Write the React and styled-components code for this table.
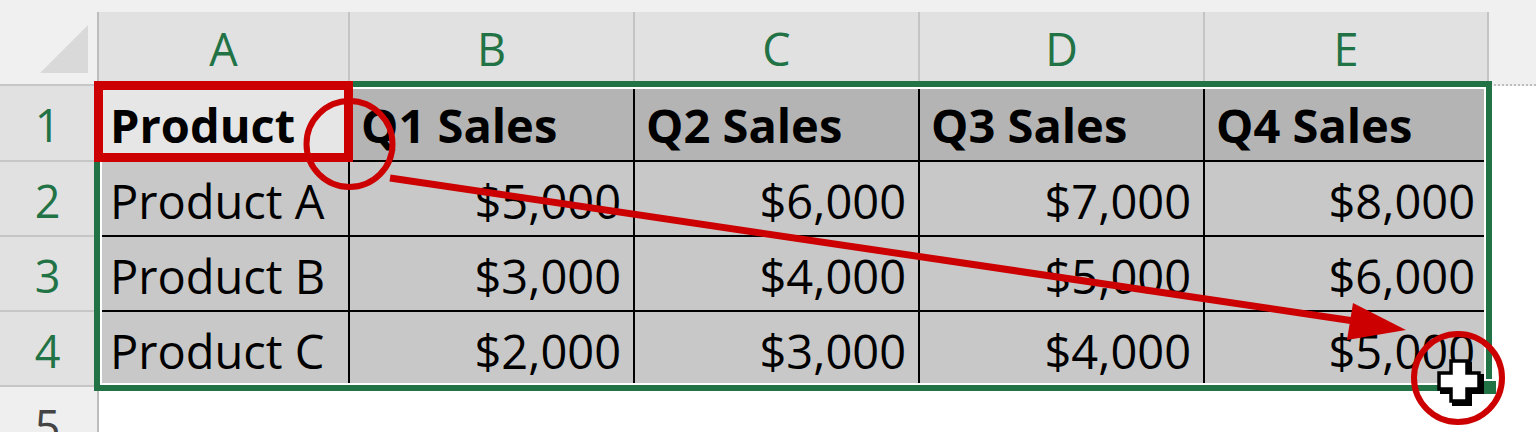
import React from "react";
import styled, { createGlobalStyle } from "styled-components";

const GREEN = "#217346";
const RED = "#cc0000";

const Global = createGlobalStyle`
  html, body {
    margin: 0;
    padding: 0;
    background: #ffffff;
    overflow: hidden;
  }
`;

const Sheet = styled.div`
  position: relative;
  width: 1536px;
  height: 432px;
  display: grid;
  grid-template-columns: 99px 251px 285px 285px 285px 284px 1fr;
  grid-template-rows: 12px 74px 76px 75px 75px 75px 1fr;
  font-family: "Open Sans", Lato, sans-serif;
  font-size: 47px;
  line-height: 46px;
  overflow: hidden;
`;

const TopStrip = styled.div`
  grid-column: 1 / -1;
  background: #f0f0f0;
`;

const Corner = styled.div`
  background: #f0f0f0;
  border-right: 2px solid #bdbdbd;
  border-bottom: 2px solid #c6c6c6;
  box-sizing: border-box;
  display: flex;
  align-items: flex-end;
  justify-content: flex-end;
  padding: 0 9px 11px 0;

  svg {
    display: block;
  }
`;

const ColHeader = styled.div`
  background: #e1e1e1;
  color: ${GREEN};
  font-size: 45px;
  border-right: 2px solid #c4c4c4;
  border-bottom: 2px solid #c6c6c6;
  box-sizing: border-box;
  text-align: center;
  padding-top: 14px;
`;

const HeaderFiller = styled.div`
  background: #f0f0f0;
  border-bottom: 2px dotted #bdbdbd;
  box-sizing: border-box;
`;

const RowHeader = styled.div`
  background: ${(p) => (p.$active ? "#e1e1e1" : "#efefef")};
  color: ${(p) => (p.$active ? GREEN : "#444444")};
  font-size: 45px;
  border-right: 2px solid #bdbdbd;
  border-bottom: 2px solid #c6c6c6;
  box-sizing: border-box;
  text-align: center;
  padding: 16px 2px 0 0;
`;

const Cell = styled.div`
  background: ${(p) => p.$bg};
  color: #000;
  font-weight: ${(p) => (p.$bold ? 700 : 400)};
  text-align: ${(p) => (p.$right ? "right" : "left")};
  border-right: 2px solid #000;
  border-bottom: 2px solid #000;
  box-sizing: border-box;
  padding: 16px 12px 0 11px;
  white-space: nowrap;
`;

const RowFiller = styled.div`
  background: #ffffff;
`;

const BlankArea = styled.div`
  grid-column: 2 / -1;
  background: #ffffff;
`;

const Selection = styled.div`
  position: absolute;
  left: 94px;
  top: 81px;
  width: 1398px;
  height: 310px;
  box-sizing: border-box;
  border: 6px solid ${GREEN};
  box-shadow: inset 0 0 0 2px #ffffff;
  pointer-events: none;
`;

const FillHandle = styled.div`
  position: absolute;
  left: 1481px;
  top: 379px;
  width: 13px;
  height: 13px;
  background: ${GREEN};
  border-top: 2px solid #fff;
  border-left: 2px solid #fff;
`;

const Overlay = styled.svg`
  position: absolute;
  left: 0;
  top: 0;
  width: 1536px;
  height: 432px;
  pointer-events: none;
`;

const columns = ["A", "B", "C", "D", "E"];
const headers = ["Product", "Q1 Sales", "Q2 Sales", "Q3 Sales", "Q4 Sales"];
const rows = [
  ["Product A", "$5,000", "$6,000", "$7,000", "$8,000"],
  ["Product B", "$3,000", "$4,000", "$5,000", "$6,000"],
  ["Product C", "$2,000", "$3,000", "$4,000", "$5,000"],
];

const plus =
  "M -8 -20 H 8 V -8 H 20 V 8 H 8 V 20 H -8 V 8 H -20 V -8 H -8 Z";

export default function App() {
  return (
    <>
      <Global />
      <Sheet>
        <TopStrip />

        <Corner>
          <svg width="48" height="48" viewBox="0 0 48 48">
            <polygon points="0,48 48,0 48,48" fill="#d9d9d9" />
          </svg>
        </Corner>
        {columns.map((c) => (
          <ColHeader key={c}>{c}</ColHeader>
        ))}
        <HeaderFiller />

        <RowHeader $active>1</RowHeader>
        {headers.map((h, i) => (
          <Cell key={h} $bold $bg={i === 0 ? "#e6e6e6" : "#b4b4b4"}>
            {h}
          </Cell>
        ))}
        <RowFiller />

        {rows.map((r, ri) => (
          <React.Fragment key={r[0]}>
            <RowHeader $active>{ri + 2}</RowHeader>
            {r.map((v, i) => (
              <Cell key={i} $right={i > 0} $bg="#c8c8c8">
                {v}
              </Cell>
            ))}
            <RowFiller />
          </React.Fragment>
        ))}

        <RowHeader>5</RowHeader>
        <BlankArea />

        <Selection />
        <FillHandle />

        <Overlay viewBox="0 0 1536 432">
          <rect
            x="98.5"
            y="85.5"
            width="250"
            height="72"
            fill="none"
            stroke={RED}
            strokeWidth="9"
          />
          <circle cx="349.5" cy="144" r="43" fill="none" stroke={RED} strokeWidth="6" />
          <line x1="390" y1="178" x2="1354" y2="321" stroke={RED} strokeWidth="7" />
          <polygon points="1406,330 1353,303 1347,340" fill={RED} />
          <circle cx="1458" cy="378" r="44" fill="none" stroke={RED} strokeWidth="6" />
          <g transform="translate(1459 381)">
            <path d={plus} fill="#000" transform="translate(3 3)" stroke="#000" strokeWidth="4" />
            <path d={plus} fill="#fff" stroke="#000" strokeWidth="3.5" strokeLinejoin="miter" />
          </g>
        </Overlay>
      </Sheet>
    </>
  );
}
